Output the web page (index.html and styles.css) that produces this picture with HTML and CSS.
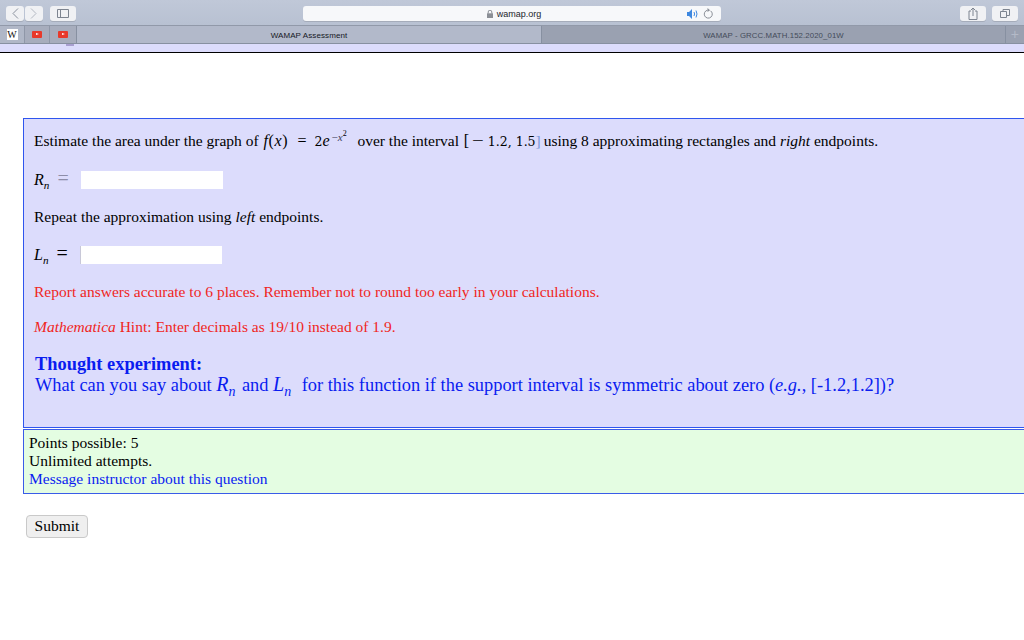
FILE: index.html
```html
<!DOCTYPE html>
<html lang="en">
<head>
<meta charset="utf-8">
<title>WAMAP Assessment</title>
<link rel="stylesheet" href="styles.css">
</head>
<body>
<header class="chrome">
  <div class="toolbar">
    <div class="left-tools">
      <div class="nav-pair">
        <span class="btn nav"><svg width="10" height="13" viewBox="0 0 10 13"><path d="M8 1.500 3 6.500l5 5" fill="none" stroke="#8a919e" stroke-width="1"/></svg></span>
        <span class="btn nav"><svg width="10" height="13" viewBox="0 0 10 13"><path d="M2 1.500l5 5-5 5" fill="none" stroke="#b4b9c3" stroke-width="1"/></svg></span>
      </div>
      <span class="btn wide"><svg width="12" height="9" viewBox="0 0 12 9"><path d="M.5.500h11v8H.5zM3.500.500v8" fill="none" stroke="#7d8490"/></svg></span>
    </div>
    <div class="address">
      <span class="address-text"><svg class="lock" width="6" height="8" viewBox="0 0 6 8"><path d="M1.200 3.500V2a1.800 1.800 0 0 1 3.600 0v1.500" fill="none" stroke="#8b8f96"/><rect y="3.300" width="6" height="4.700" fill="#8b8f96"/></svg>wamap.org</span>
      <span class="address-icons">
        <svg width="12" height="10" viewBox="0 0 12 10"><path d="M0 3h2l3-3v10L2 7H0z" fill="#3d87e0"/><path d="M7 3q1.200 2 0 4M9 1.500q2 3.500 0 7" fill="none" stroke="#3d87e0"/></svg>
        <svg width="11" height="12" viewBox="0 0 11 12"><path d="M7.500 2.800a4 4 0 1 1-3-.6" fill="none" stroke="#8a8f98"/><path d="M4.500 0 7 2.200 4.500 4z" fill="#8a8f98"/></svg>
      </span>
    </div>
    <div class="right-tools">
      <span class="btn wide"><svg width="10" height="13" viewBox="0 0 10 13"><path d="M3 4H1v8.500h8V4H7M5 9V1M3 3l2-2 2 2" fill="none" stroke="#7d8490"/></svg></span>
      <span class="btn wide"><svg width="10" height="9" viewBox="0 0 10 9"><path d="M.5 2.500h6v6h-6zM3 2.500v-2h6.500v6h-3" fill="none" stroke="#7d8490"/></svg></span>
    </div>
  </div>
  <div class="tabs">
    <div class="pins">
      <span class="pin"><span class="w-icon">W</span></span>
      <span class="pin"><span class="yt"></span></span>
      <span class="pin"><span class="yt"></span></span>
    </div>
    <div class="tab active">WAMAP Assessment</div>
    <div class="tab">WAMAP - GRCC.MATH.152.2020_01W</div>
    <div class="new-tab">+</div>
  </div>
</header>
<div class="strip"><span class="strip-mark"></span></div>

<main class="page">
  <section class="question">
    <p class="first">Estimate the area under the graph of <span class="mt w-fx"><i>f</i>(<i>x</i>)</span><span class="mt w-eq">=</span><span class="mt w-2e"><span class="num">2</span><i>e</i></span><span class="mt w-exp"><span class="exp">&minus;<i>x</i><sup class="exp2">2</sup></span></span> over the interval <span class="mt w-br">[</span><span class="mt w-minus">&minus;</span><span class="num">1.2, 1.5</span><span class="close">]</span> using 8 approximating rectangles and <i>right</i> endpoints.</p>
    <div class="answer"><span class="label"><i>R<sub>n</sub></i><span class="eq faint">=</span></span><input class="field" type="text" aria-label="Rn"></div>
    <p class="repeat">Repeat the approximation using <i>left</i> endpoints.</p>
    <div class="answer lower"><span class="label"><i>L<sub>n</sub></i><span class="eq">=</span></span><input class="field" type="text" aria-label="Ln"></div>
    <p class="red report">Report answers accurate to 6 places. Remember not to round too early in your calculations.</p>
    <p class="red hint"><i>Mathematica</i> Hint: Enter decimals as 19/10 instead of 1.9.</p>
    <p class="thought"><b>Thought experiment:</b><br>What can you say about <i class="tm tm-r">R<sub>n</sub></i> and <i class="tm tm-l">L<sub>n</sub></i> for this function if the support interval is symmetric about zero (<i>e.g.</i>, [-1.2,1.2])?</p>
  </section>
  <section class="info">
    Points possible: 5<br>
    Unlimited attempts.<br>
    <a href="#">Message instructor about this question</a>
  </section>
  <button class="submit" type="button">Submit</button>
</main>
</body>
</html>
```

FILE: styles.css
```css
* { box-sizing: border-box; }
html, body { margin: 0; padding: 0; }
body {
  width: 1024px;
  height: 640px;
  overflow: hidden;
  background: #fff;
  font-family: "Liberation Serif", "Times New Roman", serif;
  color: #000;
}

/* Browser chrome */
.chrome { font-family: "Liberation Sans", Arial, sans-serif; }
.toolbar {
  height: 26px;
  padding: 6px 6px 0 6px;
  display: flex;
  justify-content: space-between;
  background: linear-gradient(#c0c8d8, #b8c1d2);
  border-bottom: 1px solid #9199a9;
}
.left-tools, .right-tools { display: flex; gap: 7px; width: 250px; }
.right-tools { justify-content: flex-end; gap: 6px; }
.nav-pair { display: flex; gap: 1px; }
.btn {
  height: 15px;
  display: flex;
  align-items: center;
  justify-content: center;
  background: #f0f1f4;
  border-radius: 3px;
  box-shadow: 0 1px 0 #a5acba;
}
.nav { width: 18px; }
.wide { width: 26px; }
.address {
  position: absolute;
  left: 303px;
  top: 6px;
  width: 418px;
  height: 15px;
  padding: 1px 0 0 4px;
  display: flex;
  align-items: center;
  justify-content: center;
  background: #f7f8fa;
  border-radius: 3px;
  box-shadow: 0 1px 0 #a5acba;
  font-size: 9px;
  color: #22252b;
}
.lock { margin-right: 4px; }
.address-text { display: flex; align-items: center; }
.address-icons {
  position: absolute;
  right: 7px;
  top: 2px;
  display: flex;
  align-items: center;
  gap: 4px;
}
.tabs {
  height: 18px;
  display: flex;
  background: #9aa1b1;
  border-bottom: 1px solid #8790a1;
  font-size: 7.800px;
  letter-spacing: .1px;
}
.pins { width: 77px; display: flex; border-right: 1px solid #8790a1; }
.pin {
  width: 25px;
  display: flex;
  align-items: center;
  justify-content: center;
  background: #a7adbd;
  border-right: 1px solid #8f97a8;
}
.pin:first-child { background: #b0b7c7; }
.pin:last-child { flex: 1; border-right: 0; }
.w-icon {
  width: 11px;
  height: 11px;
  background: #fff;
  font: 10px/11px "Liberation Serif", serif;
  text-align: center;
  color: #111;
}
.yt { width: 10px; height: 7px; background: #e8392b; border-radius: 1px; position: relative; }
.yt::after {
  content: "";
  position: absolute;
  left: 4px;
  top: 2px;
  width: 0;
  height: 0;
  border-left: 3px solid #fff;
  border-top: 1.500px solid transparent;
  border-bottom: 1.500px solid transparent;
}
.tab {
  flex: 0 0 465px;
  padding-top: 1px;
  line-height: 17px;
  text-align: center;
  color: #444b5a;
  border-right: 1px solid #8790a1;
}
.tab.active { background: #b2b9ca; color: #15181f; font-size: 8px; }
.tab:not(.active) { flex-basis: 464px; }
.new-tab {
  flex: 1;
  text-align: center;
  color: #b4bac8;
  font-size: 14px;
  line-height: 16px;
}
.strip {
  height: 9px;
  background: #dcdcfc;
  border-bottom: 1px solid #000;
  padding-left: 66px;
}
.strip-mark { display: block; width: 8px; height: 2px; background: #a89fd0; }

/* Page */
.page { padding: 65px 0 0 23px; width: 1040px; }
.question {
  height: 310px;
  padding: 13px 10px 0 10px;
  background: #dcdcfc;
  border: 1px solid #2f55ee;
  font-size: 15.500px;
  line-height: 17px;
}
.question p { margin: 0; }
.first { white-space: nowrap; height: 17px; }
.mt { display: inline-block; font-size: 16px; }
.num { font-family: "DejaVu Serif", serif; font-size: 12.500px; }
.w-fx { width: 34px; letter-spacing: .6px; margin-left: 1px; }
.w-eq { width: 17px; }
.w-2e { width: 17px; }
.w-exp { width: 22px; }
.w-br { width: 8px; margin-left: 1px; }
.w-minus { width: 16px; transform: scaleX(1.300); transform-origin: left center; }
.close { color: #7d9ad8; margin: 0 -1px 0 0; }
.exp {
  font-size: 11px;
  line-height: 0;
  position: relative;
  top: -5px;
  color: #40405a;
}
.exp2 { font-size: 8px; line-height: 0; vertical-align: 5px; color: #000; }
sub { font-size: 70%; line-height: 0; }
.answer { display: flex; align-items: center; height: 19px; margin-top: 21px; }
.label { width: 47px; flex: none; font-size: 16px; white-space: nowrap; }
.eq { display: inline-block; font-size: 20px; line-height: 0; margin-left: 8px; }
.faint { color: #8d8da8; }
.field {
  width: 142px;
  height: 18px;
  padding: 0;
  border: 0;
  background: #fff;
  outline: 0;
}
.lower .field { border-left: 1px solid #c8c8d8; margin-left: -1px; }
.repeat { margin-top: 19px !important; }
.lower { margin-top: 20px; }
.red { color: #f0261c; }
.report { margin-top: 19px !important; }
.hint { margin-top: 18px !important; }
.thought {
  margin-top: 19px !important;
  padding-left: 1px;
  color: #0a1cf0;
  font-size: 18.400px;
  line-height: 21px;
}
.tm { display: inline-block; font-size: 20px; line-height: 0; }
.tm-r { width: 21px; }
.tm-l { width: 24px; }
.info {
  height: 65px;
  margin-top: 1px;
  padding: 4px 5px 0;
  background: #e4fde2;
  border: 1px solid #3a5ce8;
  font-size: 15.500px;
  line-height: 18px;
}
.info a { color: #0a1cf0; text-decoration: none; }
.submit {
  display: block;
  width: 62px;
  height: 23px;
  margin: 21px 0 0 3px;
  padding: 0 0 2px;
  background: #efefef;
  border: 1px solid #c9c9c9;
  border-radius: 4px;
  font: 15.500px "Liberation Serif", serif;
  color: #000;
}
```
